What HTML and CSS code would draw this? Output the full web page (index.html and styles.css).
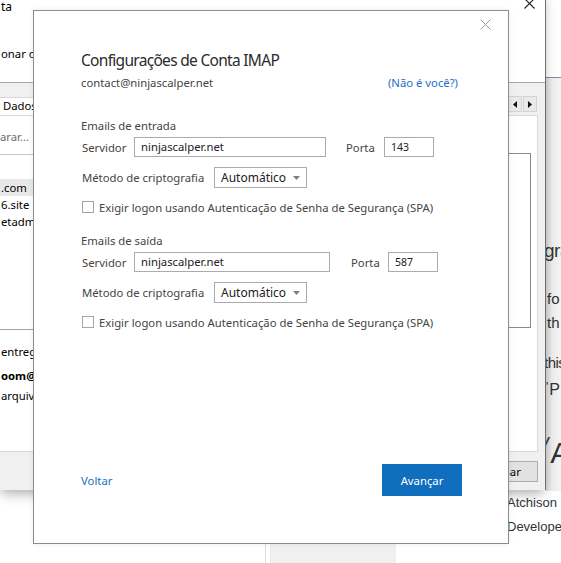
FILE: index.html
```html
<!DOCTYPE html>
<html lang="pt">
<head>
<meta charset="utf-8">
<title>Configurações de Conta IMAP</title>
<link rel="stylesheet" href="styles.css">
</head>
<body>
<div class="webpage">
  <div class="wp-side">
    <div class="wp-h">gra</div>
    <p class="wp-p wp-first">fo</p>
    <p class="wp-p">th</p>
    <p class="wp-p wp-gap">this</p>
    <p class="wp-p wp-quote"><span class="wp-tick">'</span>P</p>
    <p class="wp-big"><span class="wp-slash">/</span>A</p>
  </div>
  <div class="wp-byline">
    <div>Atchison</div>
    <div>Develope</div>
  </div>
  <div class="wp-bottom">
    <div class="wp-rule"></div>
    <div class="wp-card"></div>
  </div>
</div>

<div class="bgwin">
  <div class="bw-head">
    <div class="bw-title">ta</div>
    <svg class="bw-close" width="11" height="11" viewBox="0 0 11 11"><path d="M0.5 0.5L10.5 10.5M10.5 0.5L0.5 10.5" stroke="#222" stroke-width="1.1" fill="none"/></svg>
    <div class="bw-sub">onar o</div>
  </div>
  <div class="bw-body">
    <div class="bw-tabs">
      <div class="bw-tab">Dados</div>
      <div class="bw-arrows">
        <span class="bw-arrow"><svg width="4" height="7" viewBox="0 0 4 7"><path d="M4 0L0 3.5L4 7Z" fill="#111"/></svg></span>
        <span class="bw-arrow"><svg width="4" height="7" viewBox="0 0 4 7"><path d="M0 0L4 3.5L0 7Z" fill="#111"/></svg></span>
      </div>
    </div>
    <div class="bw-panel">
      <div class="bw-list">
        <div class="bw-search">arar...</div>
        <div class="bw-listarea">
          <div class="bw-item bw-sel">.com</div>
          <div class="bw-item">6.site</div>
          <div class="bw-item">etadmin</div>
        </div>
        <div class="bw-details">
          <div>entrega</div>
          <div class="bw-bold">oom@ninjascalper.net</div>
          <div class="bw-last">arquivo</div>
        </div>
      </div>
      <div class="bw-preview"><div class="bw-box"></div></div>
    </div>
  </div>
  <div class="bw-foot"><button class="bw-btn">Fechar</button></div>
</div>

<div class="modal">
  <svg class="m-close" width="11" height="11" viewBox="0 0 11 11"><path d="M0.5 0.5L10.5 10.5M10.5 0.5L0.5 10.5" stroke="#9a9a9a" stroke-width="1" fill="none"/></svg>
  <h1 class="m-title">Configurações de Conta IMAP</h1>
  <div class="m-account">
    <span>contact@ninjascalper.net</span>
    <a class="m-link">(Não é você?)</a>
  </div>

  <section class="m-group m-group-in">
    <div class="m-group-title">Emails de entrada</div>
    <div class="m-row m-row-server">
      <span class="m-label m-label-server">Servidor</span>
      <div class="m-input m-server">ninjascalper.net</div>
      <span class="m-label m-label-port">Porta</span>
      <div class="m-input m-port">143</div>
    </div>
    <div class="m-row m-row-select">
      <span class="m-label m-label-crypt">Método de criptografia</span>
      <div class="m-select">Automático<svg class="m-caret" width="7" height="4" viewBox="0 0 7 4"><path d="M0 0H7L3.5 4Z" fill="#808080"/></svg></div>
    </div>
    <div class="m-check"><span class="m-box"></span>Exigir logon usando Autenticação de Senha de Segurança (SPA)</div>
  </section>

  <section class="m-group m-group-out">
    <div class="m-group-title">Emails de saída</div>
    <div class="m-row m-row-server">
      <span class="m-label m-label-server">Servidor</span>
      <div class="m-input m-server m-server-wide">ninjascalper.net</div>
      <span class="m-label m-label-port m-label-port-wide">Porta</span>
      <div class="m-input m-port">587</div>
    </div>
    <div class="m-row m-row-select">
      <span class="m-label m-label-crypt">Método de criptografia</span>
      <div class="m-select">Automático<svg class="m-caret" width="7" height="4" viewBox="0 0 7 4"><path d="M0 0H7L3.5 4Z" fill="#808080"/></svg></div>
    </div>
    <div class="m-check"><span class="m-box"></span>Exigir logon usando Autenticação de Senha de Segurança (SPA)</div>
  </section>

  <div class="m-foot">
    <a class="m-back">Voltar</a>
    <button class="m-next">Avançar</button>
  </div>
</div>
</body>
</html>
```

FILE: styles.css
```css
* { box-sizing: border-box; }
html, body { margin: 0; padding: 0; }
body {
  width: 561px;
  height: 563px;
  overflow: hidden;
  position: relative;
  background: #fff;
  font-family: "Noto Sans", "Open Sans", sans-serif;
  font-size: 11.3px;
  color: #444;
}

/* ---------- web page far behind ---------- */
.webpage {
  position: absolute;
  inset: 0;
  font-family: "Liberation Sans", Arial, sans-serif;
  color: #333;
}
.wp-side {
  position: absolute;
  left: 546px;
  top: 77px;
  width: 15px;
  height: 414px;
  border-top: 1px solid #7d8fa3;
  background: linear-gradient(to right, #dcdcdc, #eeeeee 40%, #f3f3f3);
  white-space: nowrap;
}
.wp-h { margin-top: 161px; font-size: 19px; line-height: 24px; letter-spacing: -0.5px; margin-left: -2px; }
.wp-p { margin: 0; padding-left: 1px; font-size: 15px; line-height: 24px; }
.wp-first { margin-top: 24px; }
.wp-gap { margin-top: 16px; padding-left: 0; margin-left: -2px; letter-spacing: -0.5px; }
.wp-quote { padding-left: 0; font-size: 16px; }
.wp-tick { margin-right: 1px; font-size: 12px; vertical-align: 4px; }
.wp-big { margin: 24px 0 0; font-size: 30px; line-height: 40px; font-weight: 300; margin-left: -4px; }
.wp-slash { font-style: italic; font-size: 22px; margin-right: 2px; vertical-align: 10px; }
.wp-byline {
  position: absolute;
  left: 507px;
  top: 491px;
  font-size: 13px;
  line-height: 24px;
  white-space: nowrap;
}
.wp-bottom {
  position: absolute;
  left: 265px;
  top: 544px;
  height: 19px;
  display: flex;
}
.wp-rule { width: 1px; background: #dcdcdc; }
.wp-card { width: 126px; margin-left: 4px; background: #f0f0f0; }

/* ---------- background window ---------- */
.bgwin {
  position: absolute;
  left: -2px;
  top: -10px;
  width: 548px;
  height: 500px;
  display: flex;
  flex-direction: column;
  border-right: 1px solid #6e6e6e;
  box-shadow: 0 6px 12px -3px rgba(0,0,0,0.35);
  font-family: "Noto Sans", sans-serif;
  font-size: 11.3px;
  color: #000;
  white-space: nowrap;
}
.bw-head {
  position: relative;
  height: 92px;
  background: #fff;
  padding: 9px 0 0 3px;
}
.bw-title { line-height: 16px; font-size: 12px; }
.bw-close { position: absolute; top: 8px; right: 10px; }
.bw-sub { margin-top: 31px; line-height: 16px; }
.bw-body {
  flex: 1;
  display: flex;
  flex-direction: column;
  background: #f0f0f0;
  border-top: 1px solid #a8a8a8;
  padding: 14px 7px 0 0;
}
.bw-tabs {
  height: 18px;
  display: flex;
  justify-content: space-between;
}
.bw-tab {
  margin-left: 1px;
  padding: 0 10px 0 3px;
  line-height: 16px;
  background: #fff;
  border: 1px solid #d9d9d9;
  border-bottom: none;
}
.bw-arrows { display: flex; gap: 1px; margin-top: -1px; margin-right: 1px; }
.bw-arrow {
  width: 14px;
  height: 16px;
  display: flex;
  align-items: center;
  justify-content: center;
  background: #e9e9e9;
  border: 1px solid #d4d4d4;
}
.bw-panel {
  flex: 1;
  display: flex;
  background: #fff;
  border: 1px solid #d9d9d9;
}
.bw-list { width: 300px; display: flex; flex-direction: column; }
.bw-search {
  height: 39px;
  padding: 13px 0 0 1px;
  line-height: 16px;
  color: #6d6d6d;
  border-bottom: 1px solid #c8c8c8;
}
.bw-listarea {
  height: 175px;
  padding-top: 24px;
  border-bottom: 1px solid #a0a0a0;
}
.bw-item { line-height: 17px; padding-left: 2px; }
.bw-sel { background: #e8e8e8; }
.bw-details { padding: 14px 0 0 2px; line-height: 16px; }
.bw-bold { font-weight: 700; margin-top: 8px; }
.bw-last { margin-top: 4px; }
.bw-preview { flex: 1; display: flex; justify-content: flex-end; padding: 37px 6px 0 0; }
.bw-box { width: 120px; height: 175px; border: 1px solid #8a8a8a; }
.bw-foot {
  height: 38px;
  display: flex;
  align-items: center;
  justify-content: flex-end;
  padding-right: 7px;
  background: #f0f0f0;
}
.bw-btn {
  height: 21px;
  width: 75px;
  background: #e1e1e1;
  border: 1px solid #adadad;
  font-family: "Noto Sans", sans-serif;
  font-size: 11.3px;
  color: #000;
  padding: 0 0 0 5px;
  text-align: center;
}

/* ---------- modal dialog ---------- */
.modal {
  position: absolute;
  left: 33px;
  top: 10px;
  width: 476px;
  height: 534px;
  background: #fff;
  border: 1px solid #8c8c8c;
  box-shadow: 0 0 6px rgba(0,0,0,0.08);
  display: flex;
  flex-direction: column;
  padding: 38px 46px 47px 47px;
  color: #444;
}
.m-close { position: absolute; top: 8px; right: 17px; }
.m-title {
  margin: 0;
  font-size: 15.5px;
  font-weight: 400;
  letter-spacing: -0.7px;
  line-height: 22px;
  color: #2b2b2b;
}
.m-account {
  margin-top: 3px;
  line-height: 18px;
  display: flex;
  justify-content: space-between;
  padding-right: 4px;
}
.m-link { color: #1c6fbf; }
.m-group-in { margin-top: 25px; }
.m-group-out { margin-top: 17px; }
.m-group-title { line-height: 18px; }
.m-row { display: flex; align-items: center; }
.m-row-server { margin-top: 2px; height: 20px; }
.m-row-select { margin-top: 10px; height: 21px; }
.m-label { flex: none; }
.m-label-server { width: 53px; padding-left: 1px; }
.m-label-port { width: 38px; margin-left: 20px; }
.m-label-port-wide { margin-left: 21px; width: 37px; }
.m-label-crypt { width: 133px; padding-left: 1px; }
.m-input {
  height: 20px;
  border: 1px solid #ababab;
  line-height: 18px;
  color: #222;
}
.m-server { width: 192px; padding-left: 6px; }
.m-server-wide { width: 196px; }
.m-port { width: 50px; padding-left: 6px; font-size: 10.5px; }
.m-select {
  width: 93px;
  height: 21px;
  border: 1px solid #ababab;
  display: flex;
  align-items: center;
  justify-content: space-between;
  padding: 0 6px 1px 6px;
  font-size: 12px;
  color: #222;
}
.m-caret { margin-top: 1px; }
.m-check {
  margin-top: 11px;
  height: 16px;
  display: flex;
  align-items: center;
  padding-left: 1px;
}
.m-box {
  width: 12px;
  height: 12px;
  border: 1px solid #a6a6a6;
  margin-right: 5px;
}
.m-foot {
  margin-top: auto;
  height: 32px;
  display: flex;
  align-items: center;
  justify-content: space-between;
}
.m-back { color: #1c6fbf; }
.m-next {
  width: 80px;
  height: 32px;
  border: none;
  background: #106ebe;
  color: #fff;
  font-family: "Noto Sans", "Open Sans", sans-serif;
  font-size: 11.3px;
  padding: 0;
}
```
